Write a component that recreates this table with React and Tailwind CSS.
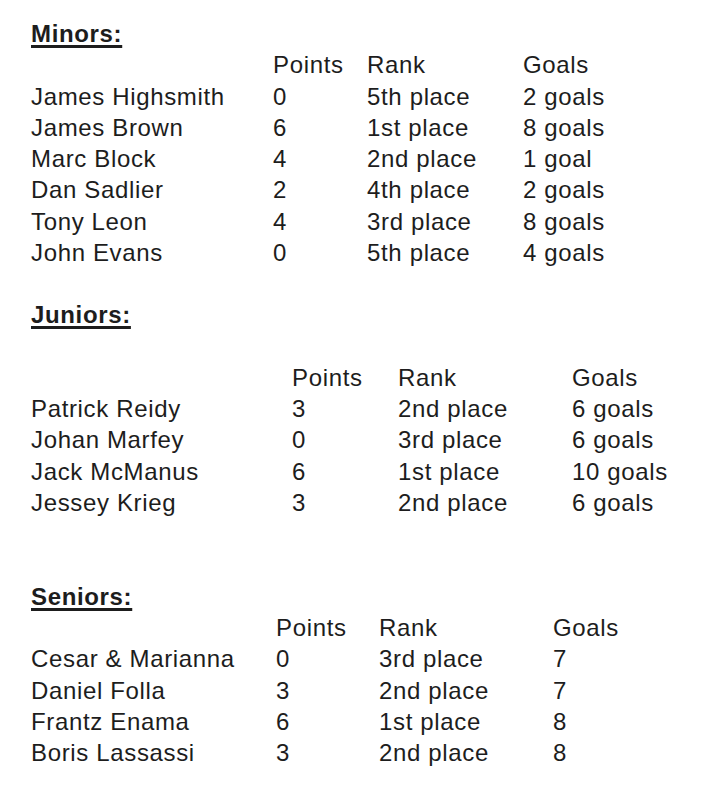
import React from "react";

const sections = [
  {
    title: "Minors:",
    gapBefore: 0,
    blankAfterTitle: false,
    cols: "grid-cols-[242px_94px_156px_1fr]",
    rows: [
      ["James Highsmith", "0", "5th place", "2 goals"],
      ["James Brown", "6", "1st place", "8 goals"],
      ["Marc Block", "4", "2nd place", "1 goal"],
      ["Dan Sadlier", "2", "4th place", "2 goals"],
      ["Tony Leon", "4", "3rd place", "8 goals"],
      ["John Evans", "0", "5th place", "4 goals"],
    ],
  },
  {
    title: "Juniors:",
    gapBefore: 1,
    blankAfterTitle: true,
    cols: "grid-cols-[261px_106px_174px_1fr]",
    rows: [
      ["Patrick Reidy", "3", "2nd place", "6 goals"],
      ["Johan Marfey", "0", "3rd place", "6 goals"],
      ["Jack McManus", "6", "1st place", "10 goals"],
      ["Jessey Krieg", "3", "2nd place", "6 goals"],
    ],
  },
  {
    title: "Seniors:",
    gapBefore: 2,
    blankAfterTitle: false,
    cols: "grid-cols-[245px_103px_174px_1fr]",
    rows: [
      ["Cesar & Marianna", "0", "3rd place", "7"],
      ["Daniel Folla", "3", "2nd place", "7"],
      ["Frantz Enama", "6", "1st place", "8"],
      ["Boris Lassassi", "3", "2nd place", "8"],
    ],
  },
];

function Blank() {
  return <div className="h-[31.26px]" />;
}

export default function App() {
  return (
    <div
      className="w-[702px] h-[794px] bg-white text-[#1d1d1d] text-[24px] leading-[31.26px] tracking-[0.65px] pt-[18px] pl-[31px] overflow-hidden"
      style={{ fontFamily: '"Liberation Sans", Arial, sans-serif' }}
    >
      {sections.map((s) => (
        <section key={s.title}>
          {s.gapBefore >= 1 && <Blank />}
          {s.gapBefore >= 2 && <Blank />}
          <h2 className="font-bold underline decoration-[2.5px] underline-offset-[3px]">
            {s.title}
          </h2>
          {s.blankAfterTitle && <Blank />}
          <div className={`grid ${s.cols}`}>
            <div />
            <div>Points</div>
            <div>Rank</div>
            <div>Goals</div>
            {s.rows.map((r) =>
              r.map((c, i) => (
                <div key={r[0] + i} className="whitespace-nowrap">
                  {c}
                </div>
              ))
            )}
          </div>
        </section>
      ))}
    </div>
  );
}
